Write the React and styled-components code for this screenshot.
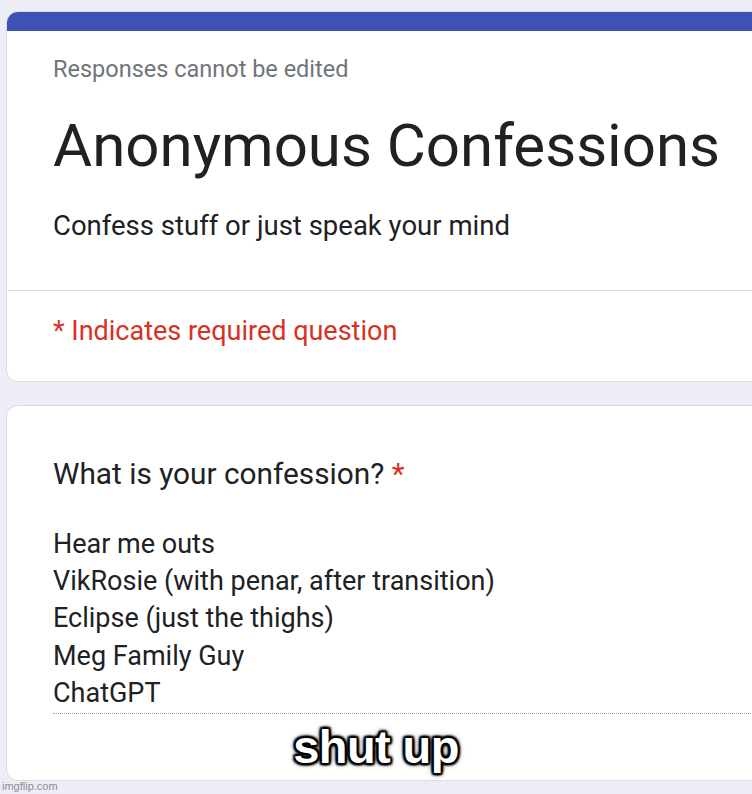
import React from "react";
import styled, { createGlobalStyle } from "styled-components";

const GlobalStyle = createGlobalStyle`
  html, body {
    margin: 0;
    padding: 0;
    background: #ecedf6;
    overflow: hidden;
  }
  body {
    font-family: Roboto, "Noto Sans", Arial, sans-serif;
  }
`;

const Page = styled.div`
  position: relative;
  width: 752px;
  height: 794px;
  padding: 11px 0 0 6px;
  box-sizing: border-box;
  display: flex;
  flex-direction: column;
  gap: 23px;
  overflow: hidden;
`;

const Card = styled.div`
  width: 780px;
  background: #fff;
  border: 1px solid #dadce0;
  border-radius: 12px;
  overflow: hidden;
  box-sizing: border-box;
  height: ${(p) => p.h}px;
`;

const TopBar = styled.div`
  height: 19px;
  background: #3f51b5;
`;

const Header = styled.div`
  padding: 25px 0 0 46px;
`;

const Note = styled.div`
  color: #70757a;
  font-size: 23.5px;
  line-height: 26px;
`;

const Title = styled.h1`
  margin: 32px 0 0;
  font-weight: 400;
  font-size: 60px;
  line-height: 64px;
  color: #202124;
  letter-spacing: 0;
`;

const Subtitle = styled.div`
  margin-top: 32px;
  font-size: 27.5px;
  line-height: 32px;
  color: #202124;
`;

const Divider = styled.div`
  margin-top: 48px;
  height: 1px;
  background: #dadce0;
`;

const Required = styled.div`
  padding: 24px 0 0 46px;
  font-size: 27px;
  line-height: 32px;
  color: #d93025;
`;

const Question = styled.div`
  padding: 50px 0 0 46px;
`;

const QTitle = styled.div`
  font-size: 29.8px;
  line-height: 36px;
  color: #202124;
`;

const Star = styled.span`
  color: #d93025;
`;

const Answer = styled.div`
  margin-top: 34px;
  font-size: 27px;
  line-height: 37.2px;
  color: #202124;
  padding-bottom: 1px;
  border-bottom: 1px dotted #9aa0a6;
`;

const Footer = styled.div`
  position: absolute;
  left: 2px;
  bottom: 2px;
  font-family: "Liberation Sans", Arial, sans-serif;
  font-size: 11px;
  color: #8d8d8d;
`;

const Caption = styled.div`
  position: absolute;
  left: 0;
  right: 0;
  top: 720px;
  text-align: center;
  font-family: "Liberation Sans", Arial, sans-serif;
  font-weight: bold;
  font-size: 47px;
  line-height: 54px;
  letter-spacing: -0.6px;
  color: #fff;
  text-shadow:
    2px 2px 2px #000, -2px -2px 2px #000, 2px -2px 2px #000, -2px 2px 2px #000,
    0 2px 2px #000, 0 -2px 2px #000, 2px 0 2px #000, -2px 0 2px #000,
    0 0 6px #000;
`;

const lines = [
  "Hear me outs",
  "VikRosie (with penar, after transition)",
  "Eclipse (just the thighs)",
  "Meg Family Guy",
  "ChatGPT",
];

export default function App() {
  return (
    <Page>
      <GlobalStyle />
      <Card h={371}>
        <TopBar />
        <Header>
          <Note>Responses cannot be edited</Note>
          <Title>Anonymous Confessions</Title>
          <Subtitle>Confess stuff or just speak your mind</Subtitle>
        </Header>
        <Divider />
        <Required>* Indicates required question</Required>
      </Card>
      <Card h={376}>
        <Question>
          <QTitle>
            What is your confession? <Star>*</Star>
          </QTitle>
          <Answer>
            {lines.map((l) => (
              <div key={l}>{l}</div>
            ))}
          </Answer>
        </Question>
      </Card>
      <Caption>shut up</Caption>
      <Footer>imgflip.com</Footer>
    </Page>
  );
}
